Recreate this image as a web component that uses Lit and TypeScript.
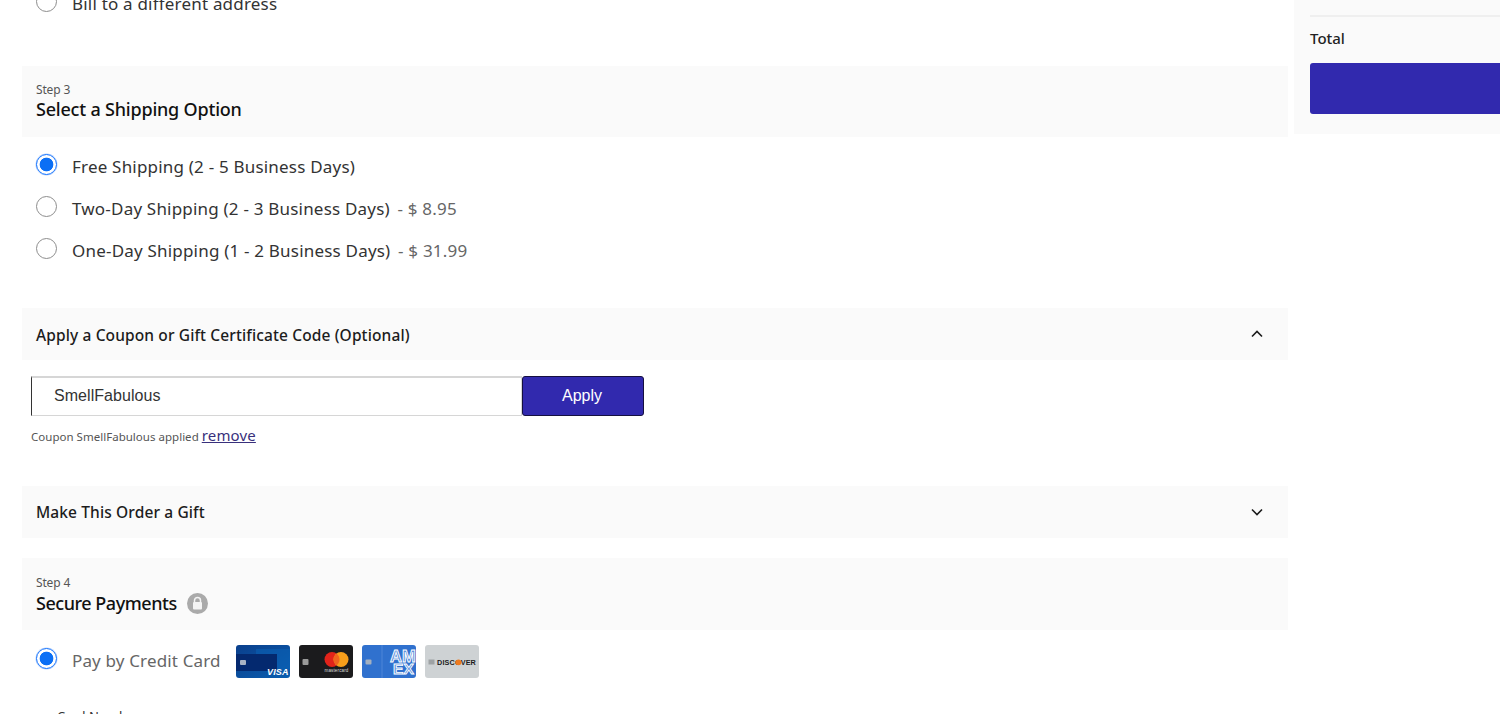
import { LitElement, html, css, svg } from "lit";
import { customElement } from "lit/decorators.js";

const visa = svg`<svg class="card" viewBox="0 0 54 33"><defs><linearGradient id="v" x1="0" x2="1" y1="0" y2="1"><stop offset="0" stop-color="#0a3f8c"/><stop offset="1" stop-color="#0a5eb0"/></linearGradient></defs><rect width="54" height="33" rx="3" fill="url(#v)"/><rect x="20" y="4" width="34" height="20" fill="#0b60b5" opacity=".55"/><rect y="9" width="41" height="17" fill="#04296f"/><rect x="4" y="15" width="6" height="5" rx="1" fill="#a9b3c4"/><text x="31" y="29.5" font-family="Liberation Sans" font-size="9" font-weight="700" font-style="italic" fill="#fff">VISA</text></svg>`;
const mc = svg`<svg class="card" viewBox="0 0 54 33"><rect width="54" height="33" rx="3" fill="#1b1b1d"/><rect x="3.500" y="14" width="6" height="6" rx="1" fill="#9a9a9a"/><circle cx="33" cy="14.500" r="7.500" fill="#e2231a"/><circle cx="42" cy="14.500" r="7.500" fill="#f79e1b"/><path d="M37.500 8.500a7.500 7.500 0 0 1 0 12a7.500 7.500 0 0 1 0-12z" fill="#f0641e"/><text x="37.500" y="27" text-anchor="middle" font-family="Liberation Sans" font-size="4.500" fill="#ddd">mastercard</text></svg>`;
const amex = svg`<svg class="card" viewBox="0 0 54 33"><rect width="54" height="33" rx="3" fill="#3071ce"/><rect x="19.500" width="1" height="33" fill="#4c86d8" /><rect x="3.500" y="14.500" width="6" height="5" rx="1" fill="#a3b0c0"/><svg x="24" width="30" height="33" viewBox="0 0 30 33"><text x="4" y="17" font-family="Liberation Sans" font-size="16.500" font-weight="700" fill="#5b90dc" stroke="#fff" stroke-width=".9">AM</text><text x="7" y="29" font-family="Liberation Sans" font-size="15.500" font-weight="700" fill="#5b90dc" stroke="#fff" stroke-width=".9">EX</text></svg></svg>`;
const disc = svg`<svg class="card" viewBox="0 0 54 33"><rect width="54" height="33" rx="3" fill="#ced2d4"/><rect x="3.500" y="14.500" width="6" height="5" fill="#9ea2a4"/><text x="12" y="20" font-family="Liberation Sans" font-size="7.600" font-weight="700" fill="#1c1c1c" textLength="39" lengthAdjust="spacingAndGlyphs">DISCOVER</text><circle cx="33.500" cy="17.300" r="2.900" fill="#ee7a1f"/></svg>`;

const chevron = (up: boolean) => svg`<svg class="chev" viewBox="0 0 12 8"><path d="${up ? "M1 6.500 6 1.500l5 5" : "M1 1.500l5 5 5-5"}" fill="none" stroke="#1b1b1b" stroke-width="1.600"/></svg>`;

@customElement("app-root")
export class AppRoot extends LitElement {
  static styles = css`
    :host { display: block; height: 714px; overflow: hidden; background: #fff; font-family: "Noto Sans", "Open Sans", sans-serif; color: #222; }
    .page { display: grid; grid-template-columns: 1266px 212px; column-gap: 6px; padding-left: 22px; align-items: start; }
    .main { display: flex; flex-direction: column; margin-top: -17px; }
    .side { background: #fafafa; padding: 15px 0 20px 16px; }
    .rule { height: 2px; background: #efefef; }
    .total { font-size: 15px; font-weight: 500; line-height: 20px; margin-top: 11px; color: #222; }
    .checkout { height: 51px; margin-top: 15px; background: #3129ae; border-radius: 3px 0 0 3px; }
    .opts { display: flex; flex-direction: column; padding-left: 14px; }
    .opts.ship { margin-top: 9px; }
    .opt { height: 42px; display: flex; align-items: center; gap: 15px; font-size: 17px; color: #333; letter-spacing: 0.2px; white-space: nowrap; }
    .label-text { position: relative; top: -1px; }
    .radio { width: 21px; height: 21px; box-sizing: border-box; border-radius: 50%; border: 1.500px solid #8d8d8d; background: #fff; margin-top: -6px; flex: none; }
    .radio.on { border: 1.500px solid #0d6efd; background: radial-gradient(circle, #0b6ff5 0 6.500px, #fff 7.200px); box-shadow: 0 0 0 0.500px #b9d3fb; }
    .price { color: #666; margin-left: 3px; }
    .head { background: #fafafa; height: 71px; box-sizing: border-box; padding: 16px 14px 0; }
    .head.first { margin-top: 41px; }
    .head.first .title { margin-top: -1px; }
    .head.second { margin-top: 20px; height: 72px; padding-top: 17px; }
    .step { font-size: 12px; line-height: 15px; color: #555; letter-spacing: -0.15px; }
    .title { font-size: 18px; font-weight: 500; line-height: 26px; color: #111; letter-spacing: -0.2px; display: flex; align-items: center; gap: 10px; }
    .title.tight { letter-spacing: -0.47px; }
    .lock { width: 21px; height: 21px; }
    .bar { background: #fafafa; height: 52px; display: flex; align-items: center; justify-content: space-between; padding: 2px 25px 0 14px; box-sizing: border-box; font-size: 15.500px; font-weight: 500; color: #1c1c1c; letter-spacing: 0.12px; }
    .bar.coupon { margin-top: 36px; }
    .bar.gift { margin-top: 40px; padding-top: 0; }
    .chev { width: 12px; height: 8px; position: relative; top: -1px; }
    .bar.gift .chev { top: 0; }
    .form { display: flex; margin: 16px 0 0 9px; width: 613px; height: 40px; }
    .code { flex: 1; box-sizing: border-box; height: 40px; border: 1px solid #d6d6d6; border-top-width: 2px; border-left: 1px solid #333; display: flex; align-items: center; padding: 0 0 1px 22px; font: 16px "Liberation Sans", Arial, sans-serif; color: #333; letter-spacing: 0.05px; }
    .apply { width: 122px; height: 40px; box-sizing: border-box; background: #3129ae; color: #fff; border: 1px solid #151040; border-radius: 3px; display: flex; align-items: center; justify-content: center; padding-right: 2px; font: 16px "Liberation Sans", Arial, sans-serif; }
    .note { margin: 8px 0 0 9px; height: 22px; font-size: 11.500px; color: #555; line-height: 22px; letter-spacing: 0.02px; }
    .note a { font-size: 15px; color: #39307c; text-decoration: underline; letter-spacing: 0.15px; }
    .pay { height: 46px; display: flex; align-items: center; gap: 15px; padding-left: 14px; margin-top: 8px; font-size: 17px; color: #666; letter-spacing: 0.15px; }
    .pay .label-text { top: -1px; }
    .cards { display: flex; gap: 9px; }
    .card { width: 54px; height: 33px; display: block; }
    .label { margin: 23px 0 0 35px; font-size: 13px; color: #333; }
  `;

  private opt(label: string, price: string, on = false) {
    return html`<div class="opt"><span class="radio ${on ? "on" : ""}"></span><span class="label-text">${label}${price ? html`<span class="price"> - ${price}</span>` : ""}</span></div>`;
  }

  render() {
    return html`<div class="page">
      <div class="main">
        <div class="opts">${this.opt("Bill to a different address", "")}</div>
        <div class="head first"><div class="step">Step 3</div><div class="title">Select a Shipping Option</div></div>
        <div class="opts ship">
          ${this.opt("Free Shipping (2 - 5 Business Days)", "", true)}
          ${this.opt("Two-Day Shipping (2 - 3 Business Days)", "$ 8.95")}
          ${this.opt("One-Day Shipping (1 - 2 Business Days)", "$ 31.99")}
        </div>
        <div class="bar coupon"><span>Apply a Coupon or Gift Certificate Code (Optional)</span>${chevron(true)}</div>
        <div class="form"><div class="code">SmellFabulous</div><div class="apply">Apply</div></div>
        <div class="note">Coupon SmellFabulous applied <a>remove</a></div>
        <div class="bar gift"><span>Make This Order a Gift</span>${chevron(false)}</div>
        <div class="head second"><div class="step">Step 4</div>
          <div class="title tight">Secure Payments
            <svg class="lock" viewBox="0 0 21 21"><circle cx="10.500" cy="10.500" r="10.500" fill="#aaa"/><path d="M7.500 9V7.500a3 3 0 0 1 6 0V9" fill="none" stroke="#f4f4f4" stroke-width="1.500"/><rect x="6" y="9" width="9" height="7.500" rx="1" fill="#f4f4f4"/></svg>
          </div>
        </div>
        <div class="pay"><span class="radio on"></span><span class="label-text">Pay by Credit Card</span>
          <div class="cards">${visa}${mc}${amex}${disc}</div>
        </div>
        <div class="label">Card Number</div>
      </div>
      <aside class="side"><div class="rule"></div><div class="total">Total</div><div class="checkout"></div></aside>
    </div>`;
  }
}
